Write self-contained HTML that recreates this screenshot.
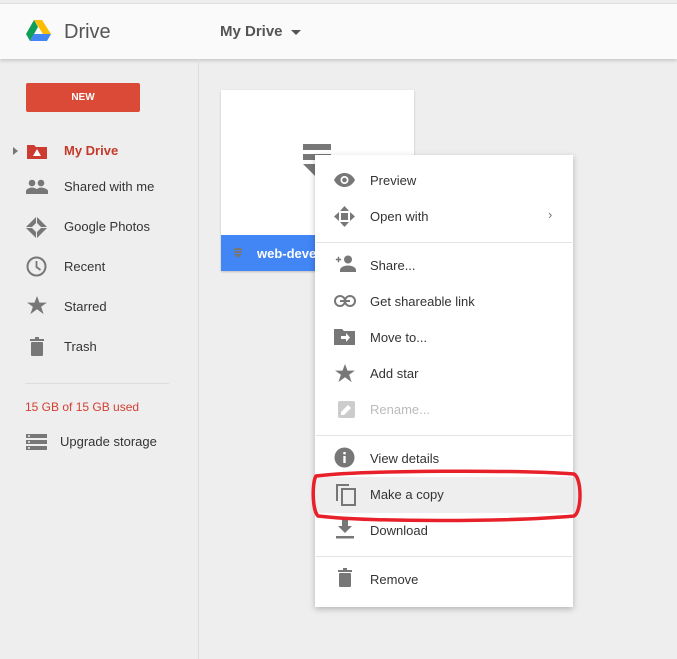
<!DOCTYPE html>
<html><head><style>
*{margin:0;padding:0;box-sizing:border-box}
body{width:677px;height:656px;background:#eeeeee;font-family:"Liberation Sans",sans-serif;position:relative;overflow:hidden;color:#333}
.abs{position:absolute}
.top{left:0;top:3px;width:677px;height:56px;background:#fafafa;border-top:1px solid #e0e0e0;box-shadow:0 2px 3px rgba(0,0,0,.15)}
.side{left:198px;top:59px;width:1px;height:600px;background:#ddd}
.nav{font-size:13px;color:#333}
.mi{font-size:13px;color:#333;left:370px}
.ic{left:334px}
</style></head><body>
<div class="abs top"></div>
<svg class="abs" style="left:26px;top:20px" width="25" height="22" viewBox="0 0 25 22">
<polygon points="8,0 16,0 25,14 17,14" fill="#fbbc04"/>
<polygon points="8,0 12,7 4,21 0,14" fill="#0f9d58"/>
<polygon points="4,21 8,14 25,14 21,21" fill="#4285f4"/>
</svg>
<div class="abs" style="left:64px;top:21px;font-size:20px;color:#555">Drive</div>
<div class="abs" style="left:220px;top:23px;font-size:15px;font-weight:bold;color:#555">My Drive</div>
<div class="abs" style="left:291px;top:30px;width:0;height:0;border-left:5px solid transparent;border-right:5px solid transparent;border-top:5px solid #555"></div>
<div class="abs side"></div>
<div class="abs" style="left:26px;top:83px;width:114px;height:29px;background:#db4a37;border-radius:2px;color:#fff;font-size:10px;font-weight:bold;text-align:center;line-height:29px">NEW</div>
<div class="abs" style="left:13px;top:147px;width:0;height:0;border-top:4px solid transparent;border-bottom:4px solid transparent;border-left:5px solid #777"></div>
<svg class="abs" style="left:27px;top:143px" width="20" height="16"><path d="M0 2h7l2 2h11v12H0z" fill="#cc3b2f"/><polygon points="10,6 14,13 6,13" fill="#fff"/></svg>
<div class="abs nav" style="left:64px;top:143px;color:#c53929;font-weight:bold">My Drive</div>
<svg class="abs" style="left:26px;top:179px" width="22" height="15"><circle cx="6" cy="4" r="3.3" fill="#777"/><circle cx="15" cy="4" r="3.3" fill="#777"/><path d="M0 15v-3c0-2 4-3.5 6-3.5s6 1.5 6 3.5v3zM10 15v-3c0-2 3-3.5 5-3.5s7 1.5 7 3.5v3z" fill="#777"/></svg>
<div class="abs nav" style="left:64px;top:179px">Shared with me</div>
<svg class="abs" style="left:26px;top:217px" width="21" height="21" viewBox="0 0 21 21"><path d="M10 0v6l-4 4H0l4-4zM21 10h-6l-4-4V0l4 4zM11 21v-6l4-4h6l-4 4zM0 11h6l4 4v6l-4-4z" fill="#777"/></svg>
<div class="abs nav" style="left:64px;top:219px">Google Photos</div>
<svg class="abs" style="left:26px;top:256px" width="21" height="21"><circle cx="10.5" cy="10.5" r="9" fill="none" stroke="#777" stroke-width="2"/><path d="M10.5 5v6l4 3" stroke="#777" stroke-width="1.8" fill="none"/></svg>
<div class="abs nav" style="left:64px;top:259px">Recent</div>
<svg class="abs" style="left:27px;top:296px" width="20" height="19" viewBox="0 0 24 23"><path d="M12 0l3 8h9l-7 5 3 9-8-6-8 6 3-9-7-5h9z" fill="#777"/></svg>
<div class="abs nav" style="left:64px;top:299px">Starred</div>
<svg class="abs" style="left:30px;top:337px" width="14" height="19"><rect x="0" y="2" width="14" height="2" fill="#777"/><rect x="5" y="0" width="4" height="2" fill="#777"/><rect x="1" y="5" width="12" height="14" rx="1" fill="#777"/></svg>
<div class="abs nav" style="left:64px;top:339px">Trash</div>
<div class="abs" style="left:25px;top:383px;width:144px;height:1px;background:#ddd"></div>
<div class="abs" style="left:25px;top:400px;font-size:12px;color:#d23f31">15 GB of 15 GB used</div>
<svg class="abs" style="left:26px;top:434px" width="21" height="16"><rect y="0" width="21" height="4" fill="#777"/><rect y="6" width="21" height="4" fill="#777"/><rect y="12" width="21" height="4" fill="#777"/><rect x="2" y="1.2" width="2" height="1.5" fill="#eee"/><rect x="2" y="7.2" width="2" height="1.5" fill="#eee"/><rect x="2" y="13.2" width="2" height="1.5" fill="#eee"/></svg>
<div class="abs nav" style="left:60px;top:434px">Upgrade storage</div>
<div class="abs" style="left:221px;top:90px;width:193px;height:181px;background:#fff;box-shadow:0 1px 2px rgba(0,0,0,.2)"></div>
<svg class="abs" style="left:303px;top:144px" width="28" height="40"><rect width="28" height="6" fill="#777"/><rect y="10" width="28" height="6" fill="#777"/><polygon points="0,20 28,20 14,34" fill="#777"/></svg>
<div class="abs" style="left:221px;top:235px;width:193px;height:36px;background:#4285f4"></div>
<svg class="abs" style="left:234px;top:248px" width="8" height="10"><rect width="8" height="2" fill="#777"/><rect y="3" width="8" height="2" fill="#777"/><polygon points="0,6 8,6 4,10" fill="#777"/></svg>
<div class="abs" style="left:257px;top:246px;font-size:13px;font-weight:bold;color:#fff">web-devel</div>
<div class="abs" style="left:315px;top:155px;width:258px;height:452px;background:#fff;box-shadow:0 2px 6px rgba(0,0,0,.25)"></div>
<div class="abs" style="left:315px;top:477px;width:258px;height:36px;background:#eee"></div>
<div class="abs" style="left:316px;top:242px;width:256px;height:1px;background:#e3e3e3"></div>
<div class="abs" style="left:316px;top:435px;width:256px;height:1px;background:#e3e3e3"></div>
<div class="abs" style="left:316px;top:556px;width:256px;height:1px;background:#e3e3e3"></div>
<svg class="abs ic" style="top:173px" width="21" height="14"><path d="M0 7C3 1 8 0 10.5 0S18 1 21 7c-3 6-8 7-10.5 7S3 13 0 7z" fill="#777"/><circle cx="10.5" cy="7" r="4" fill="#fff"/><circle cx="10.5" cy="7" r="2.3" fill="#777"/></svg>
<div class="abs mi" style="top:173px">Preview</div>
<svg class="abs ic" style="top:206px" width="21" height="21"><polygon points="10.5,0 15,5 6,5" fill="#777"/><polygon points="10.5,21 15,16 6,16" fill="#777"/><polygon points="0,10.5 5,6 5,15" fill="#777"/><polygon points="21,10.5 16,6 16,15" fill="#777"/><rect x="7" y="7" width="7" height="7" fill="#777"/></svg>
<div class="abs mi" style="top:209px">Open with</div>
<div class="abs" style="left:548px;top:207px;font-size:13px;color:#777">›</div>
<svg class="abs ic" style="top:255px" width="22" height="17"><path d="M2 4h2v-2h1v2h2v1h-2v2h-1v-2h-2z" fill="#777" stroke="#777" stroke-width=".5"/><circle cx="14" cy="4.5" r="4" fill="#777"/><path d="M6 17v-2c0-3 5-4.5 8-4.5s8 1.5 8 4.5v2z" fill="#777"/></svg>
<div class="abs mi" style="top:258px">Share...</div>
<svg class="abs ic" style="top:295px" width="22" height="12"><rect x="1" y="1" width="10" height="10" rx="5" fill="none" stroke="#777" stroke-width="2"/><rect x="11" y="1" width="10" height="10" rx="5" fill="none" stroke="#777" stroke-width="2"/><rect x="6" y="5" width="10" height="2" fill="#777"/></svg>
<div class="abs mi" style="top:294px">Get shareable link</div>
<svg class="abs ic" style="top:328px" width="21" height="17"><path d="M0 1h8l2 2h11v14H0z" fill="#777"/><path d="M7 8h5V5l4 4.5-4 4.5v-3H7z" fill="#fff"/></svg>
<div class="abs mi" style="top:330px">Move to...</div>
<svg class="abs ic" style="top:364px;left:335px" width="20" height="19" viewBox="0 0 24 23"><path d="M12 0l3 8h9l-7 5 3 9-8-6-8 6 3-9-7-5h9z" fill="#777"/></svg>
<div class="abs mi" style="top:366px">Add star</div>
<svg class="abs ic" style="top:401px;left:338px" width="17" height="17"><rect width="17" height="17" rx="2" fill="#ccc"/><path d="M3 14v-3l7-7 3 3-7 7z" fill="#fff"/></svg>
<div class="abs mi" style="top:402px;color:#bbb">Rename...</div>
<svg class="abs ic" style="top:447px" width="21" height="21"><circle cx="10.5" cy="10.5" r="10" fill="#777"/><rect x="9.3" y="9" width="2.4" height="7" fill="#fff"/><rect x="9.3" y="5" width="2.4" height="2.4" fill="#fff"/></svg>
<div class="abs mi" style="top:451px">View details</div>
<svg class="abs ic" style="top:484px;left:336px" width="20" height="22"><path d="M1 17V1h12" fill="none" stroke="#777" stroke-width="2"/><rect x="6" y="5" width="13" height="16" fill="none" stroke="#777" stroke-width="2"/></svg>
<div class="abs mi" style="top:487px">Make a copy</div>
<svg class="abs ic" style="top:519px;left:336px" width="18" height="20"><path d="M6 0h6v7h4l-7 7-7-7h4z" fill="#777"/><rect y="17" width="18" height="2.5" fill="#777"/></svg>
<div class="abs mi" style="top:523px">Download</div>
<svg class="abs ic" style="top:568px;left:338px" width="14" height="19"><rect x="0" y="2" width="14" height="2" fill="#777"/><rect x="5" y="0" width="4" height="2" fill="#777"/><rect x="1" y="5" width="12" height="14" rx="1" fill="#777"/></svg>
<div class="abs mi" style="top:572px">Remove</div>
<svg class="abs" style="left:308px;top:468px" width="276" height="56"><path d="M8 8C60 2 210 2 266 6 274 10 274 44 266 48 200 54 60 54 10 48 4 42 4 14 8 8z" fill="none" stroke="#e8202a" stroke-width="3.5"/></svg>
</body></html>
